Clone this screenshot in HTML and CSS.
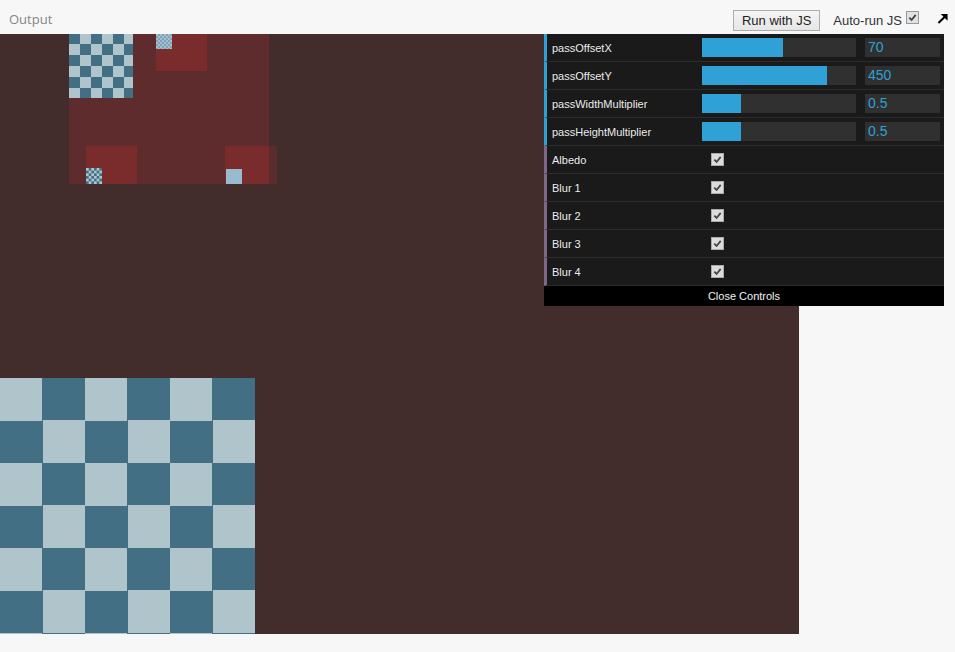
FILE: index.html
```html
<!DOCTYPE html>
<html>
<head>
<meta charset="utf-8">
<link rel="stylesheet" href="styles.css">
</head>
<body>
<div class="topbar">
  <div class="title">Output</div>
  <div class="actions">
    <button class="run">Run with JS</button>
    <span class="auto">Auto-run JS</span>
    <span class="cb small"><svg viewBox="0 0 12 12"><path d="M2.5 6.2 L5 8.7 L9.5 3.2" fill="none" stroke="#444" stroke-width="2"/></svg></span>
    <svg class="popout" viewBox="0 0 12 12"><path d="M1 11 L8 4" stroke="#000" stroke-width="2.2" fill="none"/><polygon points="3.5,1 11,1 11,8.5" fill="#000"/></svg>
  </div>
</div>
<div class="stage">
  <div class="canvas">
    <div class="pass-area"></div>
    <div class="red r1"></div>
    <div class="red r2"></div>
    <div class="red r3"></div>
    <div class="checker-small"></div>
    <div class="blur b1"></div>
    <div class="tiny b2"></div>
    <div class="blur b3"></div>
    <div class="checker-big"></div>
  </div>
  <div class="gui">
    <ul class="rows">
      <li class="row num"><span class="name">passOffsetX</span><span class="ctrl"><span class="slider"><span class="fg" style="width:81px"></span></span><span class="val">70</span></span></li>
      <li class="row num"><span class="name">passOffsetY</span><span class="ctrl"><span class="slider"><span class="fg" style="width:125px"></span></span><span class="val">450</span></span></li>
      <li class="row num"><span class="name">passWidthMultiplier</span><span class="ctrl"><span class="slider"><span class="fg" style="width:39px"></span></span><span class="val">0.5</span></span></li>
      <li class="row num"><span class="name">passHeightMultiplier</span><span class="ctrl"><span class="slider"><span class="fg" style="width:39px"></span></span><span class="val">0.5</span></span></li>
      <li class="row bool"><span class="name">Albedo</span><span class="ctrl"><span class="cb"><svg viewBox="0 0 12 12"><path d="M2.5 6.2 L5 8.7 L9.5 3.2" fill="none" stroke="#444" stroke-width="2"/></svg></span></span></li>
      <li class="row bool"><span class="name">Blur 1</span><span class="ctrl"><span class="cb"><svg viewBox="0 0 12 12"><path d="M2.5 6.2 L5 8.7 L9.5 3.2" fill="none" stroke="#444" stroke-width="2"/></svg></span></span></li>
      <li class="row bool"><span class="name">Blur 2</span><span class="ctrl"><span class="cb"><svg viewBox="0 0 12 12"><path d="M2.5 6.2 L5 8.7 L9.5 3.2" fill="none" stroke="#444" stroke-width="2"/></svg></span></span></li>
      <li class="row bool"><span class="name">Blur 3</span><span class="ctrl"><span class="cb"><svg viewBox="0 0 12 12"><path d="M2.5 6.2 L5 8.7 L9.5 3.2" fill="none" stroke="#444" stroke-width="2"/></svg></span></span></li>
      <li class="row bool"><span class="name">Blur 4</span><span class="ctrl"><span class="cb"><svg viewBox="0 0 12 12"><path d="M2.5 6.2 L5 8.7 L9.5 3.2" fill="none" stroke="#444" stroke-width="2"/></svg></span></span></li>
    </ul>
    <div class="close">Close Controls</div>
  </div>
</div>
</body>
</html>
```

FILE: styles.css
```css
html, body {
  margin: 0;
  padding: 0;
  background: #f7f7f7;
  font-family: "Liberation Sans", Arial, sans-serif;
}

.topbar {
  height: 34px;
  display: flex;
  align-items: center;
  justify-content: space-between;
}

.title {
  font-family: "Open Sans", sans-serif;
  font-size: 13px;
  color: #858585;
  padding-left: 9px;
  margin-top: 3px;
}

.actions {
  display: flex;
  align-items: center;
  padding-right: 6px;
  margin-top: 7px;
}

.run {
  font-family: "Liberation Sans", Arial, sans-serif;
  font-size: 13px;
  color: #222;
  height: 21px;
  padding: 0 8px;
  border: 1px solid #adadad;
  border-radius: 0;
  background: linear-gradient(#f4f4f4, #e6e6e6);
  margin-right: 13px;
}

.auto {
  font-size: 13px;
  color: #333;
  margin-right: 4px;
}

.cb {
  display: inline-block;
  width: 11px;
  height: 11px;
  border: 1px solid #9a9a9a;
  background: #e2e2e2;
  box-sizing: content-box;
}

.cb svg {
  display: block;
  width: 11px;
  height: 11px;
}

.cb.small {
  margin-top: -6px;
}

.popout {
  width: 12px;
  height: 11px;
  margin-left: 18px;
  margin-top: -5px;
}

.stage {
  position: relative;
  width: 799px;
  height: 600px;
}

.canvas {
  position: relative;
  width: 799px;
  height: 600px;
  background: #432c2c;
  overflow: hidden;
}

.pass-area {
  position: absolute;
  left: 69px;
  top: 0;
  width: 200px;
  height: 150px;
  background: #5e2c2d;
}

.red {
  position: absolute;
  width: 51px;
  background: #7a2c2d;
}

.r1 { left: 156px; top: 0; height: 37px; }
.r2 { left: 86px; top: 112px; height: 38px; }
.r3 {
  left: 225px; top: 112px; height: 38px; width: 44px;
  box-shadow: 8px 0 0 0 #5a2c2d;
}

.checker-small {
  position: absolute;
  left: 69px;
  top: 0;
  width: 64px;
  height: 64px;
  background-color: #b0c4cc;
  background-image: conic-gradient(#436f85 0 25%, #b0c4cc 0 50%, #436f85 0 75%, #b0c4cc 0);
  background-size: 22px 22px;
  background-position: 11px -1px;
}

.blur {
  position: absolute;
  width: 16px;
  height: 15px;
  background: #98bbd0;
  filter: blur(0.6px);
}

.b1 {
  left: 156px; top: 0;
  background-color: #8fb0c4;
  background-image: conic-gradient(#7fa2b8 0 25%, #a2c0d0 0 50%, #7fa2b8 0 75%, #a2c0d0 0);
  background-size: 4px 4px;
}

.b3 { left: 226px; top: 135px; }

.tiny {
  position: absolute;
  left: 86px;
  top: 134px;
  width: 16px;
  height: 16px;
  background-image: conic-gradient(#436f85 0 25%, #b0c4cc 0 50%, #436f85 0 75%, #b0c4cc 0);
  background-size: 5.33px 5.33px;
}

.checker-big {
  position: absolute;
  left: 0;
  top: 344px;
  width: 255px;
  height: 256px;
  background-image: conic-gradient(#436f85 0 25%, #b0c4cc 0 50%, #436f85 0 75%, #b0c4cc 0);
  background-size: 85px 85px;
}

.gui {
  position: absolute;
  left: 544px;
  top: 0;
  width: 400px;
  font-size: 11px;
  color: #eee;
  text-shadow: 0 -1px 0 #111;
}

.rows {
  list-style: none;
  margin: 0;
  padding: 0;
  background: #1a1a1a;
}

.row {
  height: 27px;
  border-bottom: 1px solid #2c2c2c;
  display: flex;
  align-items: center;
  padding-left: 5px;
  padding-right: 4px;
}

.row.num { border-left: 3px solid #2fa1d6; }
.row.bool { border-left: 3px solid #806787; }

.name {
  width: 150px;
  flex: none;
}

.ctrl {
  display: flex;
  align-items: center;
  flex: 1;
}

.slider {
  width: 154px;
  height: 19px;
  background: #303030;
  display: block;
  flex: none;
}

.fg {
  display: block;
  height: 100%;
  background: #2fa1d6;
}

.val {
  margin-left: 9px;
  width: 72px;
  height: 19px;
  line-height: 19px;
  padding-left: 3px;
  background: #303030;
  color: #2fa1d6;
  font-size: 14px;
  text-shadow: none;
}

.bool .cb {
  margin-left: 9px;
  width: 11px;
  height: 11px;
  border-color: #aaa;
  background: #dcdcdc;
}

.close {
  height: 20px;
  line-height: 20px;
  background: #000;
  text-align: center;
  color: #eee;
}
```
